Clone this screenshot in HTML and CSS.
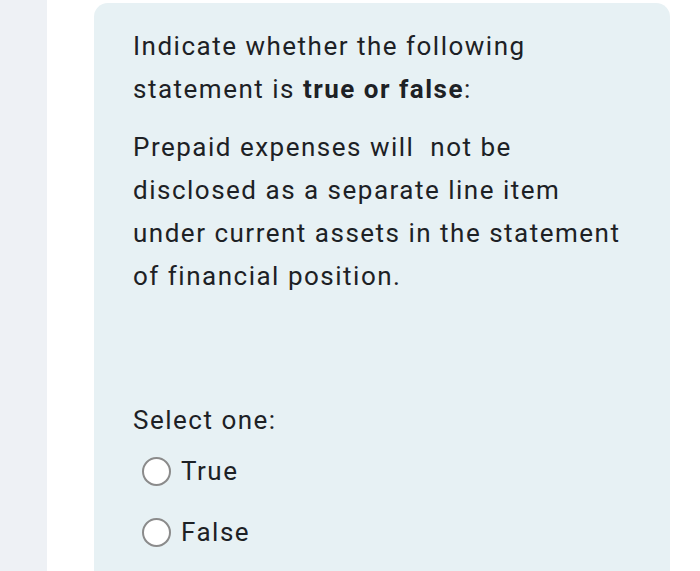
FILE: index.html
```html
<!DOCTYPE html>
<html>
<head>
<meta charset="utf-8">
<link rel="stylesheet" href="styles.css">
</head>
<body>
<div class="page">
  <div class="side"></div>
  <div class="gutter"></div>
  <div class="card">
    <p class="para">Indicate whether the following statement is <b>true or false</b>:</p>
    <p class="para second">Prepaid expenses will&nbsp; not be disclosed as a separate line item under current assets in the statement of financial position.</p>
    <p class="prompt">Select one:</p>
    <div class="options">
      <label class="option"><span class="radio"></span><span>True</span></label>
      <label class="option"><span class="radio"></span><span>False</span></label>
    </div>
  </div>
</div>
</body>
</html>
```

FILE: styles.css
```css
html, body {
  margin: 0;
  padding: 0;
  background: #ffffff;
}
.page {
  display: flex;
  height: 571px;
  overflow: hidden;
  font-family: Roboto, "Liberation Sans", sans-serif;
  color: #1d2125;
}
.side {
  width: 47px;
  flex: none;
  background: #eef1f5;
}
.gutter {
  width: 47px;
  flex: none;
}
.card {
  width: 576px;
  flex: none;
  margin-top: 3px;
  background: #e7f1f4;
  border-radius: 14px 14px 0 0;
  padding: 22px 30px 0 39px;
  box-sizing: border-box;
  font-size: 26px;
  line-height: 43px;
  letter-spacing: 1.5px;
}
.para {
  margin: 0;
}
.para b {
  font-weight: 700;
}
.second {
  margin-top: 15px;
}
.prompt {
  margin: 101px 0 0 0;
}
.options {
  display: flex;
  flex-direction: column;
  margin-top: -1px;
}
.option {
  display: flex;
  align-items: center;
  height: 61px;
  gap: 10px;
  padding-left: 9px;
}
.radio {
  width: 25px;
  height: 25px;
  border: 2.5px solid #8b8b8b;
  border-radius: 50%;
  background: #ffffff;
  flex: none;
}
```
